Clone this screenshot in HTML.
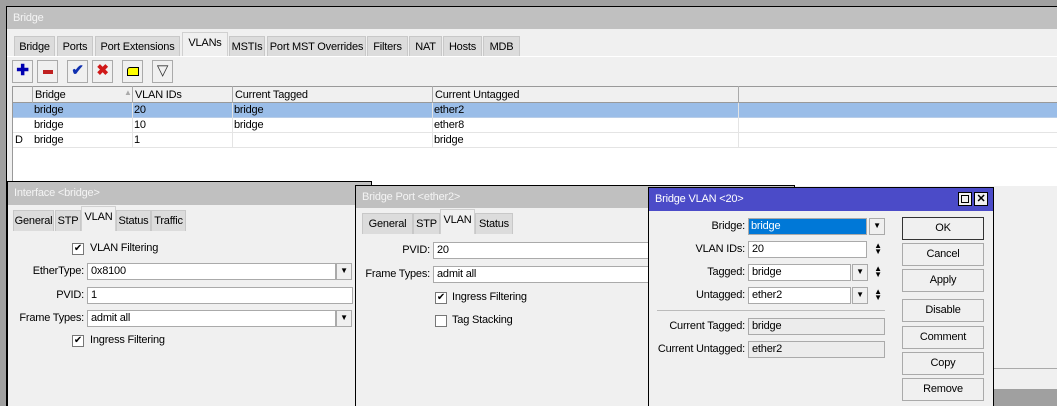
<!DOCTYPE html>
<html><head><meta charset="utf-8"><style>
*{box-sizing:border-box;margin:0;padding:0}
html,body{width:1057px;height:406px;overflow:hidden}
body{background:#a0a0a0;font-family:"Liberation Sans",Tahoma,sans-serif;font-size:11px;letter-spacing:-0.2px;color:#000;position:relative;white-space:nowrap}
.a{position:absolute}
.win{position:absolute;background:#f0f0f0;border:1px solid #000}
.title{position:absolute;left:0;right:0;top:0;height:22px;background:#c0c0c0;color:#f4f4f4;padding:5px 6px}
.tab{position:absolute;height:21px;background:#dcdcdc;border:1px solid #c8c8c8;border-bottom:none;padding:4px 0 0;text-align:center;overflow:hidden}
.tab.on{background:#f0f0f0;height:25px;border-color:#d0d0d0;padding-top:4px}
.inp{position:absolute;background:#fff;border:1px solid #aaa;height:17px;padding:1px 3px;overflow:hidden}
.dd{position:absolute;width:16px;height:17px;background:#f0f0f0;border:1px solid #aaa;font-size:8px;text-align:center;line-height:14px}
.lbl{position:absolute;text-align:right}
.cb{position:absolute;width:12px;height:12px;background:#fff;border:1px solid #777;font-size:10px;line-height:10px;text-align:center}
.tb{position:absolute;top:60px;width:21px;height:23px;background:#f0f0f0;border:1px solid #aaa;text-align:center;font-weight:bold;font-size:15px;line-height:20px}
.row{position:absolute;left:13px;right:0;height:15px;border-bottom:1px solid #e4e4e4}
.row span{position:absolute;top:1px}
.btn{position:absolute;left:902px;width:82px;height:23px;background:#f0f0f0;border:1px solid #aaa;text-align:center;padding-top:4px}
.sp{position:absolute;font-size:8px;line-height:6px;width:10px;text-align:center}
</style></head><body>
<div class="win" style="left:6px;top:6px;width:1060px;height:400px;background:#f0f0f0;border-bottom:none">
 <div class="title">Bridge</div>
</div>
<div class="tab" style="left:14px;top:36px;width:41px">Bridge</div>
<div class="tab" style="left:57px;top:36px;width:36px">Ports</div>
<div class="tab" style="left:95px;top:36px;width:85px">Port Extensions</div>
<div class="tab on" style="left:182px;top:32px;width:46px">VLANs</div>
<div class="tab" style="left:229px;top:36px;width:36px">MSTIs</div>
<div class="tab" style="left:267px;top:36px;width:99px">Port MST Overrides</div>
<div class="tab" style="left:367px;top:36px;width:41px">Filters</div>
<div class="tab" style="left:409px;top:36px;width:33px">NAT</div>
<div class="tab" style="left:443px;top:36px;width:39px">Hosts</div>
<div class="tab" style="left:483px;top:36px;width:37px">MDB</div>
<div class="a" style="left:7px;top:56px;width:1050px;height:1px;background:#fff"></div>
<div class="tb" style="left:12px;color:#0000b0">✚</div>
<div class="tb" style="left:37px"><div class="a" style="left:5px;top:9px;width:10px;height:4px;background:#c02020"></div></div>
<div class="tb" style="left:67px;color:#1030b0">✔</div>
<div class="tb" style="left:92px;color:#d01818">✖</div>
<div class="tb" style="left:122px"><div class="a" style="left:4px;top:6px;width:12px;height:9px;background:#ffff00;border:1px solid #000;border-radius:3px 0 0 0"></div></div>
<div class="tb" style="left:152px;font-weight:normal;color:#333">▽</div>
<div class="a" style="left:12px;top:86px;width:1045px;height:100px;background:#fff;border-left:1px solid #999"></div>
<div class="a" style="left:13px;top:86px;width:1044px;height:17px;background:#f0f0f0;border-top:1px solid #999;border-bottom:1px solid #999"></div>
<div class="a" style="left:32px;top:86px;width:1px;height:17px;background:#aaa"></div>
<div class="a" style="left:132px;top:86px;width:1px;height:17px;background:#aaa"></div>
<div class="a" style="left:232px;top:86px;width:1px;height:17px;background:#aaa"></div>
<div class="a" style="left:432px;top:86px;width:1px;height:17px;background:#aaa"></div>
<div class="a" style="left:738px;top:86px;width:1px;height:17px;background:#aaa"></div>
<div class="a" style="left:35px;top:89px">Bridge</div><div class="a" style="left:124px;top:88px;font-size:8px;color:#aaa">▲</div>
<div class="a" style="left:135px;top:89px">VLAN IDs</div>
<div class="a" style="left:235px;top:89px">Current Tagged</div>
<div class="a" style="left:435px;top:89px">Current Untagged</div>
<div class="row" style="top:103px;background:#9abde8;border-bottom:1px solid #b8cde8"><span style="left:21px">bridge</span><span style="left:121px">20</span><span style="left:221px">bridge</span><span style="left:421px">ether2</span></div>
<div class="row" style="top:118px"><span style="left:21px">bridge</span><span style="left:121px">10</span><span style="left:221px">bridge</span><span style="left:421px">ether8</span></div>
<div class="row" style="top:133px"><span style="left:2px">D</span><span style="left:21px">bridge</span><span style="left:121px">1</span><span style="left:421px">bridge</span></div>
<div class="a" style="left:232px;top:103px;width:1px;height:45px;background:#e4e4e4"></div>
<div class="a" style="left:432px;top:103px;width:1px;height:45px;background:#e4e4e4"></div>
<div class="a" style="left:738px;top:103px;width:1px;height:45px;background:#e4e4e4"></div>
<div class="a" style="left:132px;top:103px;width:1px;height:45px;background:#e4e4e4"></div>
<div class="a" style="left:993px;top:368px;width:64px;height:1px;background:#aaa"></div>
<div class="a" style="left:993px;top:369px;width:64px;height:20px;background:#f0f0f0"></div>
<div class="a" style="left:993px;top:389px;width:64px;height:17px;background:#a0a0a0"></div>
<div class="win" style="left:7px;top:181px;width:365px;height:230px">
 <div class="title" style="height:23px">Interface &lt;bridge&gt;</div>
</div>
<div class="tab" style="left:13px;top:210px;width:41px">General</div>
<div class="tab" style="left:55px;top:210px;width:26px">STP</div>
<div class="tab on" style="left:81px;top:206px;width:35px">VLAN</div>
<div class="tab" style="left:116px;top:210px;width:35px">Status</div>
<div class="tab" style="left:151px;top:210px;width:35px">Traffic</div>
<div class="cb" style="left:72px;top:243px">✔</div><div class="a" style="left:90px;top:242px">VLAN Filtering</div>
<div class="lbl" style="left:10px;width:74px;top:265px">EtherType:</div>
<div class="inp" style="left:87px;top:263px;width:249px">0x8100</div><div class="dd" style="left:336px;top:263px">▼</div>
<div class="lbl" style="left:10px;width:74px;top:289px">PVID:</div>
<div class="inp" style="left:87px;top:287px;width:266px">1</div>
<div class="lbl" style="left:10px;width:74px;top:312px">Frame Types:</div>
<div class="inp" style="left:87px;top:310px;width:249px">admit all</div><div class="dd" style="left:336px;top:310px">▼</div>
<div class="cb" style="left:72px;top:335px">✔</div><div class="a" style="left:90px;top:334px">Ingress Filtering</div>
<div class="win" style="left:355px;top:185px;width:440px;height:230px">
 <div class="title" style="height:22px">Bridge Port &lt;ether2&gt;</div>
</div>
<div class="tab" style="left:362px;top:213px;width:51px">General</div>
<div class="tab" style="left:413px;top:213px;width:27px">STP</div>
<div class="tab on" style="left:440px;top:209px;width:35px">VLAN</div>
<div class="tab" style="left:475px;top:213px;width:38px">Status</div>
<div class="lbl" style="left:360px;width:70px;top:244px">PVID:</div>
<div class="inp" style="left:433px;top:242px;width:230px">20</div>
<div class="lbl" style="left:360px;width:70px;top:268px">Frame Types:</div>
<div class="inp" style="left:433px;top:266px;width:230px">admit all</div>
<div class="cb" style="left:435px;top:292px">✔</div><div class="a" style="left:452px;top:291px">Ingress Filtering</div>
<div class="cb" style="left:435px;top:315px"></div><div class="a" style="left:452px;top:314px">Tag Stacking</div>
<div class="win" style="left:648px;top:187px;width:346px;height:230px">
 <div class="title" style="height:23px;background:#4b4bc8;color:#fff">Bridge VLAN &lt;20&gt;</div>
 <div class="a" style="left:309px;top:4px;width:14px;height:14px;background:#f0f0f0;border:1px solid #000"><div class="a" style="left:2px;top:2px;width:8px;height:8px;border:1px solid #000"></div></div>
 <div class="a" style="left:325px;top:4px;width:14px;height:14px;background:#f0f0f0;border:1px solid #000;font-size:11px;line-height:12px;text-align:center;font-weight:bold">✕</div>
</div>
<div class="lbl" style="left:650px;width:95px;top:220px">Bridge:</div>
<div class="inp" style="left:748px;top:218px;width:119px;padding:0"><span style="background:#0078d7;color:#fff;display:block;height:15px;padding:1px 2px">bridge</span></div><div class="dd" style="left:869px;top:218px">▼</div>
<div class="lbl" style="left:650px;width:95px;top:243px">VLAN IDs:</div>
<div class="inp" style="left:748px;top:241px;width:119px">20</div><div class="sp" style="left:873px;top:243px">▲<br>▼</div>
<div class="lbl" style="left:650px;width:95px;top:266px">Tagged:</div>
<div class="inp" style="left:748px;top:264px;width:103px">bridge</div><div class="dd" style="left:852px;top:264px">▼</div><div class="sp" style="left:873px;top:266px">▲<br>▼</div>
<div class="lbl" style="left:650px;width:95px;top:289px">Untagged:</div>
<div class="inp" style="left:748px;top:287px;width:103px">ether2</div><div class="dd" style="left:852px;top:287px">▼</div><div class="sp" style="left:873px;top:289px">▲<br>▼</div>
<div class="a" style="left:657px;top:310px;width:228px;height:1px;background:#bbb"></div>
<div class="lbl" style="left:650px;width:95px;top:320px">Current Tagged:</div>
<div class="inp" style="left:748px;top:318px;width:137px;background:#ececec">bridge</div>
<div class="lbl" style="left:650px;width:95px;top:343px">Current Untagged:</div>
<div class="inp" style="left:748px;top:341px;width:137px;background:#ececec">ether2</div>
<div class="btn" style="top:217px;border:1px solid #333">OK</div>
<div class="btn" style="top:243px">Cancel</div>
<div class="btn" style="top:269px">Apply</div>
<div class="btn" style="top:299px">Disable</div>
<div class="btn" style="top:326px">Comment</div>
<div class="btn" style="top:352px">Copy</div>
<div class="btn" style="top:378px">Remove</div>
</body></html>
